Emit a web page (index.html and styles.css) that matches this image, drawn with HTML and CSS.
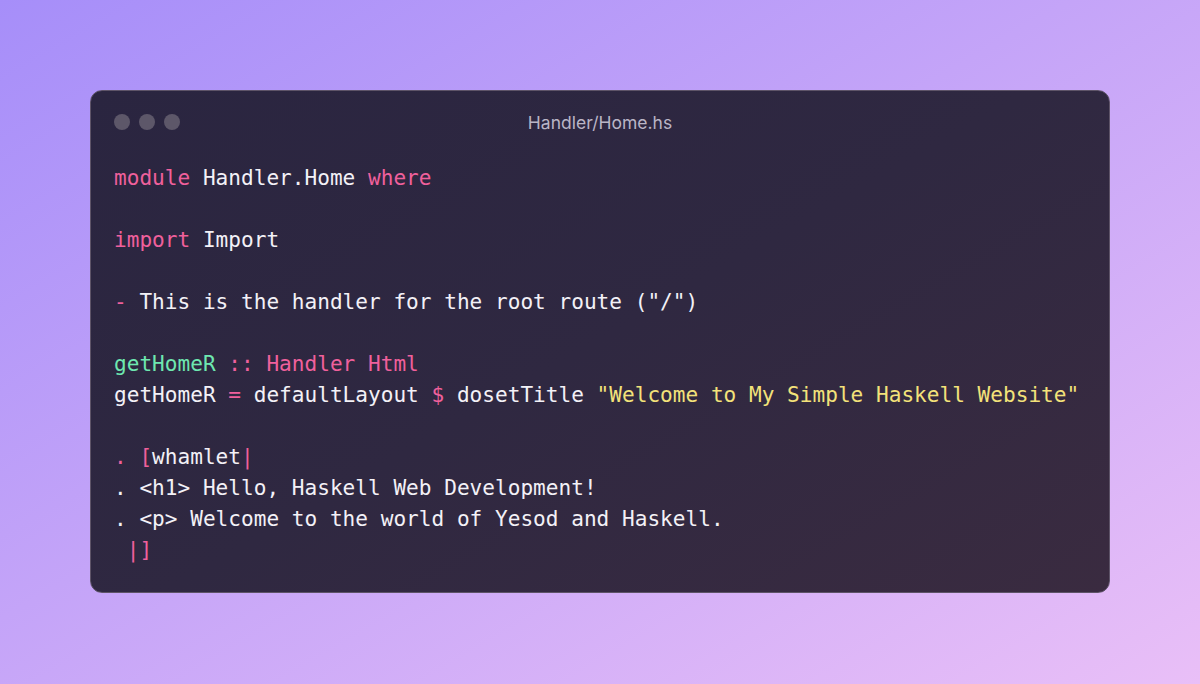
FILE: index.html
```html
<!DOCTYPE html>
<html>
<head>
<meta charset="utf-8">
<link rel="stylesheet" href="styles.css">
</head>
<body>
<div class="stage">
  <div class="window">
    <div class="titlebar">
      <div class="dots"><span class="dot"></span><span class="dot"></span><span class="dot"></span></div>
      <div class="title">Handler/Home.hs</div>
    </div>
    <pre class="code"><span class="kw">module</span> Handler.Home <span class="kw">where</span>

<span class="kw">import</span> Import

<span class="kw">-</span> This is the handler for the root route ("/")

<span class="fn">getHomeR</span> <span class="kw">::</span> <span class="kw">Handler Html</span>
getHomeR <span class="kw">=</span> defaultLayout <span class="kw">$</span> dosetTitle <span class="str">"Welcome to My Simple Haskell Website"</span>

<span class="kw">.</span> <span class="kw">[</span>whamlet<span class="kw">|</span>
. &lt;h1&gt; Hello, Haskell Web Development!
. &lt;p&gt; Welcome to the world of Yesod and Haskell.
<span class="kw"> |]</span></pre>
  </div>
</div>
</body>
</html>
```

FILE: styles.css
```css
html, body {
  margin: 0;
  padding: 0;
}
body {
  width: 1200px;
  height: 684px;
  background: linear-gradient(150deg, #a68ef9 0%, #c4a4f8 45%, #e9bff7 100%);
  overflow: hidden;
}
.stage {
  padding: 90px 90px 0 90px;
}
.window {
  height: 503px;
  box-sizing: border-box;
  border: 1px solid #5e5468;
  border-radius: 12px;
  background: linear-gradient(150deg, #2a2540 0%, #2f2841 50%, #3a2b40 100%);
  padding: 23px 23px 0 23px;
}
.titlebar {
  position: relative;
  height: 16px;
  display: flex;
  align-items: center;
}
.dots {
  display: flex;
  gap: 9px;
}
.dot {
  width: 16px;
  height: 16px;
  border-radius: 50%;
  background: #5d5769;
}
.title {
  position: absolute;
  left: 0;
  right: 0;
  top: 1px;
  text-align: center;
  font-family: Inter, "Noto Sans", sans-serif;
  font-size: 17.5px;
  line-height: 16px;
  color: #bab5c6;
}
.code {
  margin: 32px 0 0 0;
  font-family: "DejaVu Sans Mono", monospace;
  font-size: 21.1px;
  line-height: 31px;
  color: #f3f1f7;
  white-space: pre;
}
.kw { color: #f0609c; }
.fn { color: #6ee7b0; }
.str { color: #f3e27a; }
```
